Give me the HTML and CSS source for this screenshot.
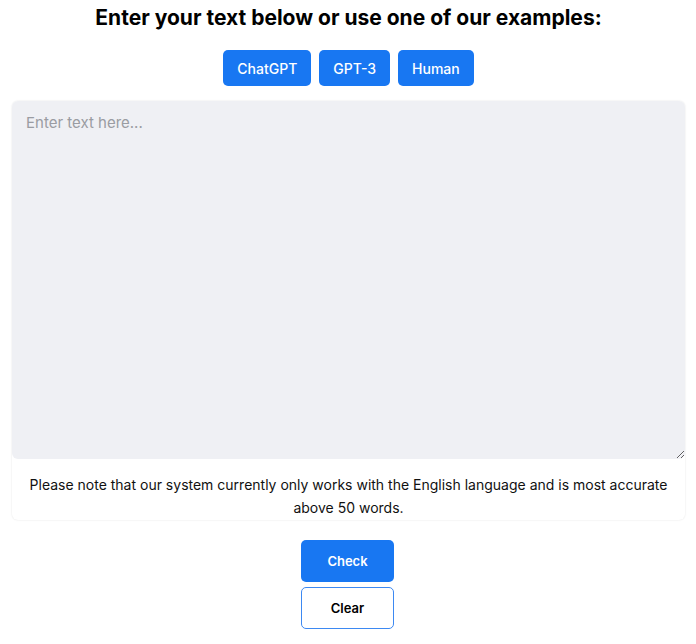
FILE: index.html
```html
<!DOCTYPE html>
<html>
<head>
<meta charset="utf-8">
<link rel="stylesheet" href="styles.css">
</head>
<body>
<div class="page">
  <h1 class="title">Enter your text below or use one of our examples:</h1>
  <div class="examples">
    <button class="btn-example">ChatGPT</button>
    <button class="btn-example">GPT-3</button>
    <button class="btn-example">Human</button>
  </div>
  <div class="card">
    <textarea class="input" placeholder="Enter text here..."></textarea>
    <p class="note">Please note that our system currently only works with the English language and is most accurate above 50 words.</p>
  </div>
  <div class="actions">
    <button class="btn-check">Check</button>
    <button class="btn-clear">Clear</button>
  </div>
</div>
</body>
</html>
```
FILE: styles.css
```css
* { box-sizing: border-box; }
body {
  margin: 0;
  font-family: Inter, "Noto Sans", sans-serif;
  background: #fff;
  color: #111;
}
.page {
  padding: 5px 11px 0 12px;
  display: flex;
  flex-direction: column;
  align-items: stretch;
}
.title {
  margin: 0;
  text-align: center;
  font-size: 21px;
  font-weight: 700;
  line-height: 26px;
  color: #000;
}
.examples {
  display: flex;
  justify-content: center;
  gap: 8px;
  margin-top: 19px;
  margin-left: 0;
}
.btn-example {
  background: #1877f2;
  color: #fff;
  border: none;
  border-radius: 5px;
  height: 36px;
  padding: 0 14px;
  font-family: Inter, "Noto Sans", sans-serif;
  font-size: 14px;
  font-weight: 500;
}
.card {
  margin-top: 15px;
  border-radius: 6px;
  box-shadow: 0 0 2px rgba(0,0,0,0.12);
  display: flex;
  flex-direction: column;
}
.input {
  display: block;
  width: 100%;
  height: 358px;
  background: #eff0f4;
  border: none;
  border-radius: 6px;
  padding: 12px 14px;
  font-family: Inter, "Noto Sans", sans-serif;
  font-size: 15px;
  resize: vertical;
  outline: none;
}
.input::placeholder { color: #9a9ca2; }
.note {
  margin: 0;
  padding: 14px 10px 1px;
  text-align: center;
  font-size: 14px;
  line-height: 23px;
  color: #111;
}
.actions {
  display: flex;
  flex-direction: column;
  align-items: center;
  gap: 5px;
  margin-top: 20px;
  margin-right: 2px;
}
.btn-check, .btn-clear {
  width: 93px;
  height: 42px;
  border-radius: 5px;
  font-family: Inter, "Noto Sans", sans-serif;
  font-size: 13px;
  font-weight: 600;
}
.btn-check {
  background: #1877f2;
  color: #fff;
  border: none;
}
.btn-clear {
  background: #fff;
  color: #000;
  border: 1px solid #3d89f2;
}
```
